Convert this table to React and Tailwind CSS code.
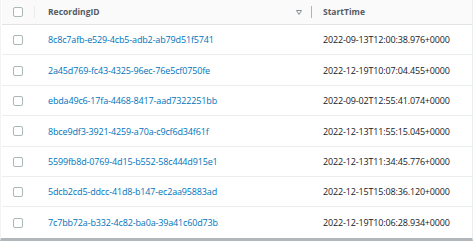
const rows = [
  ["8c8c7afb-e529-4cb5-adb2-ab79d51f5741", "2022-09-13T12:00:38.976+0000"],
  ["2a45d769-fc43-4325-96ec-76e5cf0750fe", "2022-12-19T10:07:04.455+0000"],
  ["ebda49c6-17fa-4468-8417-aad7322251bb", "2022-09-02T12:55:41.074+0000"],
  ["8bce9df3-3921-4259-a70a-c9cf6d34f61f", "2022-12-13T11:55:15.045+0000"],
  ["5599fb8d-0769-4d15-b552-58c444d915e1", "2022-12-13T11:34:45.776+0000"],
  ["5dcb2cd5-ddcc-41d8-b147-ec2aa95883ad", "2022-12-15T15:08:36.120+0000"],
  ["7c7bb72a-b332-4c82-ba0a-39a41c60d73b", "2022-12-19T10:06:28.934+0000"],
];

function Checkbox() {
  return <div className="w-[10px] h-[10px] border border-[#aab7b8] rounded-[2px] bg-white" />;
}

export default function App() {
  return (
    <div
      className="w-[474px] h-[242px] overflow-hidden bg-white"
      style={{ fontFamily: '"Open Sans", sans-serif' }}
    >
      <div className="w-[473px] border-x border-[#eaeded] border-l-[#f2f3f3] pl-px border-b-[3px] border-b-[#b0b6b9]">
        {/* header */}
        <div className="grid grid-cols-[33px_277px_1fr] h-[25px] bg-[#fafafa] border-b border-[#e1e4e4] items-center text-[8.5px] font-bold text-[#545b64]">
          <div className="flex items-center justify-between pl-[11px] h-full">
            <Checkbox />
            <div className="w-px h-[12px] bg-[#eaeded]" />
          </div>
          <div className="flex items-center justify-between pl-[13px] h-full">
            <span>RecordingID</span>
            <div className="flex items-center gap-[9px]">
              <svg width="6" height="5" viewBox="0 0 6 5" className="mt-px">
                <path d="M0.5 0.5 H5.5 L3 4.5 Z" fill="none" stroke="#879196" strokeWidth="1" strokeLinejoin="round" />
              </svg>
              <div className="w-px h-[12px] bg-[#aab7b8]" />
            </div>
          </div>
          <div className="pl-[11px]">StartTime</div>
        </div>
        {rows.map(([id, time], i) => (
          <div
            key={id}
            className={`grid grid-cols-[33px_277px_1fr] h-[30.4px] items-center text-[9px] tracking-[-0.15px] ${
              i < rows.length - 1 ? "border-b border-[#eaeded]" : ""
            }`}
          >
            <div className="pl-[11px] pt-px">
              <Checkbox />
            </div>
            <div className="pl-[13px] pt-px text-[#0073bb]">{id}</div>
            <div className="pl-[11px] pt-px text-[#16191f]">{time}</div>
          </div>
        ))}
      </div>
    </div>
  );
}
